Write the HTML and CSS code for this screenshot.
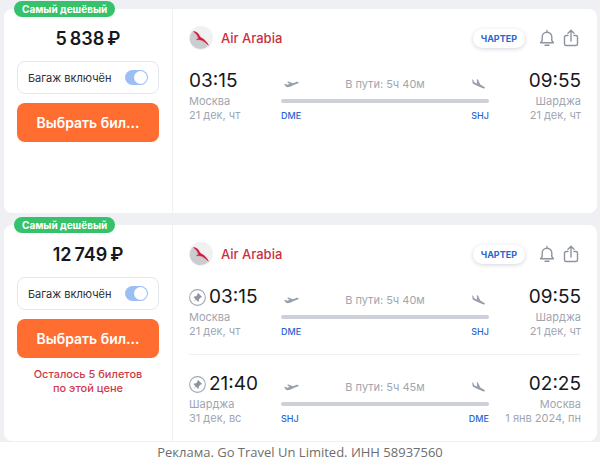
FILE: index.html
```
<!DOCTYPE html>
<html lang="ru">
<head>
  <meta charset="UTF-8" />
  <meta name="viewport" content="width=device-width, initial-scale=1" />
  <title>Авиабилеты</title>
  <link rel="stylesheet" href="styles.css">
</head>
<body>
  <!-- shared icons -->
  <svg class="sprite" width="0" height="0" aria-hidden="true">
    <symbol id="logo" viewBox="0 0 24 24">
      <circle cx="12" cy="12" r="12" fill="#f1f1f2" />
      <path d="M4 5L19 20A10.500 10.500 0 0 1 4 5z" fill="#cbcccd" />
      <path d="M4.500 5.500c2.500.2 4.500 1.300 5.500 3.500.4 1.200 1 2 2.200 2.700 3 1.500 5.800 4.300 7.300 7.600-2.300-1.800-4.300-3.800-6.500-5-1.800-.7-3.500-.9-5.500-.7 1-.6 1.800-1 2-1.700C8.700 9.500 7 7.200 4.500 5.500z" fill="#d0183f" stroke="#d0183f" stroke-width=".5" />
    </symbol>
    <symbol id="bell" viewBox="0 0 16 18">
      <path d="M8 1.500v1.200M3.200 11.500V8a4.800 4.800 0 0 1 9.600 0v3.500l1.700 2.300H1.500z" />
      <path d="M6 16.300h4" />
    </symbol>
    <symbol id="share" viewBox="0 0 16 18">
      <path d="M5 6.500H3A1.500 1.500 0 0 0 1.500 8v7A1.500 1.500 0 0 0 3 16.500h10a1.500 1.500 0 0 0 1.500-1.500V8A1.500 1.500 0 0 0 13 6.500h-2" />
      <path d="M8 12V1.500M5 4.300l3-3 3 3" />
    </symbol>
    <symbol id="takeoff" viewBox="0 0 16 10">
      <path d="M.3 5.200l1-.4 2 .9 2.600-.6L3.200 2.600l1.500-.4 4.700 1.900 3.700-1.300c1.200-.4 2.300-.3 2.500.3s-.6 1.200-1.700 1.500L10.300 6 6.600 8l-3.300.4-1.400-.7z" />
    </symbol>
    <symbol id="landing" viewBox="0 0 14 12">
      <path d="M.7 1.500l1 .3 1 2.400 2.900 1.200L5.300.9l1.100.5 2.400 5.200 3.500 1.900c.9.500 1.300 1.100 1.100 1.600s-1.100.6-2 .2L5.500 7.800 1.200 5.600z" />
    </symbol>
    <symbol id="pin" viewBox="0 0 16 16">
      <circle cx="8" cy="8" r="7.400" fill="none" stroke="#a0a7b5" />
      <path d="M8.600 3.800l3.700 3.700-.7.600-.7-.1-1.500 1.600-.2 1.900-.7.600-1.800-1.900-2.400 1.900 1.900-2.500-1.900-1.800.6-.7 1.900-.2L7.900 5.400l-.1-.8z" fill="#8c94a3" />
    </symbol>
  </svg>

  <main class="tickets">
    <article class="ticket">
      <section class="offer">
        <span class="badge">Самый дешёвый</span>
        <div class="price">5&thinsp;838&thinsp;₽</div>
        <label class="baggage">
          Багаж включён
          <input type="checkbox" class="switch" checked />
        </label>
        <button type="button" class="select-btn">Выбрать бил...</button>
      </section>
      <section class="flights">
        <header class="airline">
          <svg class="airline-logo"><use href="#logo" /></svg>
          <span class="airline-name">Air Arabia</span>
          <span class="charter">ЧАРТЕР</span>
          <button type="button" class="icon-btn" aria-label="Следить за ценой"><svg><use href="#bell" /></svg></button>
          <button type="button" class="icon-btn" aria-label="Поделиться"><svg><use href="#share" /></svg></button>
        </header>
        <div class="leg">
          <div class="point">
            <div class="time">03:15</div>
            <div>Москва</div>
            <div>21 дек, чт</div>
          </div>
          <div class="route">
            <div class="route-top">
              <svg class="plane"><use href="#takeoff" /></svg>
              <span>В пути: 5ч 40м</span>
              <svg class="plane"><use href="#landing" /></svg>
            </div>
            <div class="route-line"></div>
            <div class="airports"><span>DME</span><span>SHJ</span></div>
          </div>
          <div class="point arrival">
            <div class="time">09:55</div>
            <div>Шарджа</div>
            <div>21 дек, чт</div>
          </div>
        </div>
      </section>
    </article>

    <article class="ticket">
      <section class="offer">
        <span class="badge">Самый дешёвый</span>
        <div class="price">12&thinsp;749&thinsp;₽</div>
        <label class="baggage">
          Багаж включён
          <input type="checkbox" class="switch" checked />
        </label>
        <button type="button" class="select-btn">Выбрать бил...</button>
        <p class="seats-left">Осталось 5 билетов<br>по этой цене</p>
      </section>
      <section class="flights">
        <header class="airline">
          <svg class="airline-logo"><use href="#logo" /></svg>
          <span class="airline-name">Air Arabia</span>
          <span class="charter">ЧАРТЕР</span>
          <button type="button" class="icon-btn" aria-label="Следить за ценой"><svg><use href="#bell" /></svg></button>
          <button type="button" class="icon-btn" aria-label="Поделиться"><svg><use href="#share" /></svg></button>
        </header>
        <div class="leg">
          <div class="point">
            <div class="time"><svg class="pin"><use href="#pin" /></svg>03:15</div>
            <div>Москва</div>
            <div>21 дек, чт</div>
          </div>
          <div class="route">
            <div class="route-top">
              <svg class="plane"><use href="#takeoff" /></svg>
              <span>В пути: 5ч 40м</span>
              <svg class="plane"><use href="#landing" /></svg>
            </div>
            <div class="route-line"></div>
            <div class="airports"><span>DME</span><span>SHJ</span></div>
          </div>
          <div class="point arrival">
            <div class="time">09:55</div>
            <div>Шарджа</div>
            <div>21 дек, чт</div>
          </div>
        </div>
        <div class="leg">
          <div class="point">
            <div class="time"><svg class="pin"><use href="#pin" /></svg>21:40</div>
            <div>Шарджа</div>
            <div>31 дек, вс</div>
          </div>
          <div class="route">
            <div class="route-top">
              <svg class="plane"><use href="#takeoff" /></svg>
              <span>В пути: 5ч 45м</span>
              <svg class="plane"><use href="#landing" /></svg>
            </div>
            <div class="route-line"></div>
            <div class="airports"><span>SHJ</span><span>DME</span></div>
          </div>
          <div class="point arrival">
            <div class="time">02:25</div>
            <div>Москва</div>
            <div>1 янв 2024, пн</div>
          </div>
        </div>
      </section>
    </article>
  </main>
  <footer class="ad-note">Реклама. Go Travel Un Limited. ИНН 58937560</footer>
</body>
</html>
```
FILE: styles.css
```
* {
  box-sizing: border-box;
}

body {
  margin: 0;
  background: #fff;
  font-family: Inter, "Liberation Sans", sans-serif;
  font-size: 11px;
  color: #15181d;
}

.sprite {
  position: absolute;
}

.tickets {
  display: flex;
  flex-direction: column;
  gap: 12px;
  padding: 9px 3px 1px 4px;
  background: #eef0f3;
}

.ticket {
  position: relative;
  display: grid;
  grid-template-columns: 169px 1fr;
  min-height: 204px;
  background: #fff;
  border-radius: 8px;
}

.offer {
  padding: 17px 13px 0;
  border-right: 1px solid #f0f1f4;
  text-align: center;
}

.badge {
  position: absolute;
  top: -8px;
  left: 10px;
  padding: 0 8px;
  border-radius: 8px;
  background: #35c26b;
  color: #fff;
  font-size: 10px;
  font-weight: 700;
  line-height: 16px;
}

.price {
  font-size: 18px;
  font-weight: 600;
  line-height: 26px;
}

.baggage {
  display: flex;
  align-items: center;
  justify-content: space-between;
  height: 33px;
  margin-top: 9px;
  padding: 0 10px;
  border: 1px solid #e3e6ec;
  border-radius: 8px;
  color: #2b2f36;
}

.switch {
  appearance: none;
  width: 23px;
  height: 15px;
  margin: 0;
  padding: 1px;
  border-radius: 8px;
  background: #9bbff5;
}

.switch::before {
  content: "";
  display: block;
  width: 13px;
  height: 13px;
  border-radius: 50%;
  background: #fff;
}

.switch:checked::before {
  margin-left: auto;
}

.select-btn {
  display: block;
  width: 100%;
  height: 39px;
  margin-top: 9px;
  padding: 0 10px;
  border: none;
  border-radius: 8px;
  background: #ff6d30;
  color: #fff;
  font: 600 14px/39px Inter, "Liberation Sans", sans-serif;
  white-space: nowrap;
  cursor: pointer;
}

.seats-left {
  margin: 9px 0 0;
  color: #cf3a4b;
  font-weight: 500;
  line-height: 14px;
}

.flights {
  padding: 17px 16px 0;
}

.airline {
  display: flex;
  align-items: center;
  height: 24px;
}

.airline-logo {
  width: 24px;
  height: 24px;
}

.airline-name {
  flex: 1;
  margin-left: 8px;
  color: #c8313f;
  font-size: 13px;
  font-weight: 500;
}

.charter {
  margin-right: 14px;
  padding: 0 8px;
  border-radius: 10px;
  box-shadow: 0 1px 4px rgba(40, 50, 90, 0.2);
  color: #2a66d0;
  font-size: 9px;
  font-weight: 700;
  line-height: 19px;
}

.icon-btn {
  margin-right: 2px;
  padding: 0;
  border: none;
  background: none;
  line-height: 0;
  cursor: pointer;
}

.icon-btn + .icon-btn {
  margin-left: 6px;
}

.icon-btn svg {
  width: 16px;
  height: 18px;
  fill: none;
  stroke: #8d94a0;
  stroke-width: 1.4;
  stroke-linejoin: round;
  stroke-linecap: round;
}

.leg {
  display: grid;
  grid-template-columns: 92px 1fr 92px;
  padding: 18px 0 15px;
  color: #a0a6b1;
  line-height: 14px;
}

.leg + .leg {
  padding-top: 16px;
  border-top: 1px solid #eff1f4;
}

.time {
  display: flex;
  align-items: center;
  gap: 3px;
  height: 26px;
  color: #15181d;
  font-size: 19px;
}

.pin {
  width: 17px;
  height: 17px;
}

.arrival {
  text-align: right;
  white-space: nowrap;
}

.arrival .time {
  justify-content: flex-end;
}

.route-top {
  display: flex;
  align-items: center;
  justify-content: space-between;
  height: 31px;
  padding: 0 3px;
}

.plane {
  width: 15px;
  height: 12px;
  fill: #98a0ab;
}

.route-line {
  height: 4px;
  border-radius: 2px;
  background: #cdd0d9;
}

.airports {
  display: flex;
  justify-content: space-between;
  margin-top: 6px;
  color: #2a66d0;
  font-size: 9px;
  font-weight: 500;
}

.ad-note {
  color: #6e6e6e;
  font-family: "Open Sans", "Noto Sans", sans-serif;
  font-size: 13px;
  line-height: 18px;
  padding-top: 1px;
  text-align: center;
}
```
